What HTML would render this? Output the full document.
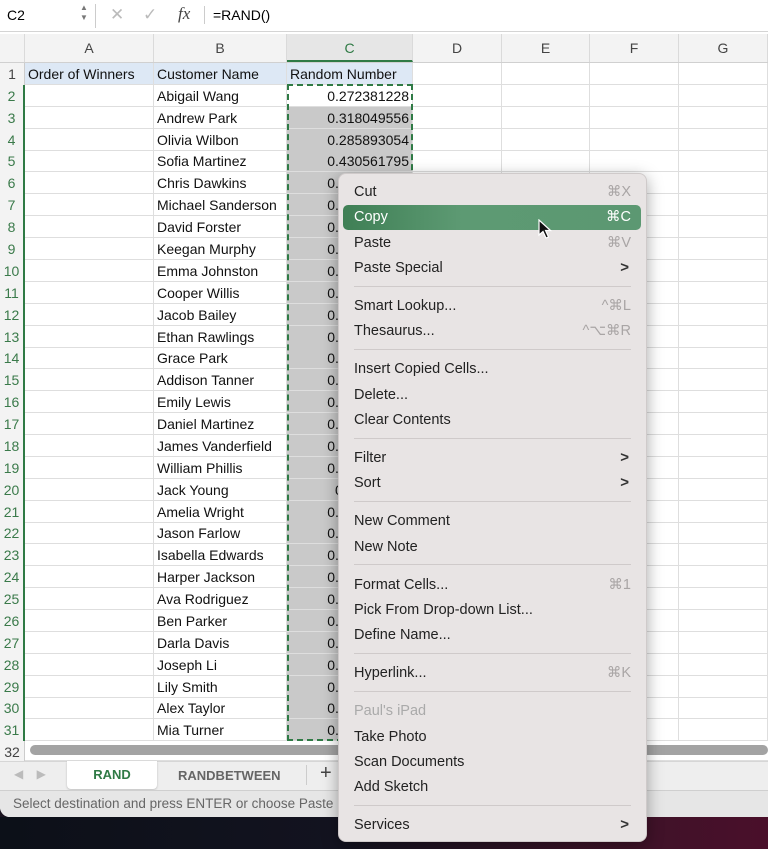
<!DOCTYPE html>
<html><head><meta charset="utf-8">
<style>
*{margin:0;padding:0;box-sizing:border-box}
body{width:768px;height:849px;overflow:hidden;background:#1a1420;font-family:"Liberation Sans",sans-serif;position:relative}
.win{position:absolute;left:0;top:0;width:768px;height:817px;background:#fff;overflow:hidden;border-bottom-left-radius:10px}
.fb{position:absolute;left:0;top:0;width:768px;height:32px;background:#fff;border-bottom:1px solid #d4d4d4;font-size:14px}
.abs{position:absolute}
.hdr{position:absolute;top:34px;height:29px;background:#f3f3f3;border-bottom:1px solid #d0d0d0;width:768px}
.ch{position:absolute;top:0;height:28px;line-height:28px;text-align:center;font-size:14px;color:#444;border-right:1px solid #dadada}
.row{position:absolute;left:0;width:768px;height:22px;border-bottom:1px solid #dedede;font-size:14px}
.rn{position:absolute;left:0;width:25px;height:22px;line-height:22px;text-align:center;background:#f3f3f3;color:#3a7a4a;border-right:2px solid #2f7a45;font-size:14px}
.c{position:absolute;top:0;height:21px;line-height:22px;border-right:1px solid #dedede;white-space:nowrap;overflow:hidden;padding:0 3px;color:#111}
.A{left:25px;width:129px}.B{left:154px;width:133px}.C{left:287px;width:126px;text-align:right;background:#c9c9c9}
.D{left:413px;width:89px}.E{left:502px;width:88px}.F{left:590px;width:89px}.G{left:679px;width:89px}
.menu{position:absolute;left:338px;top:173px;width:309px;height:669px;background:#e8e4e4;border-radius:8px;box-shadow:0 4px 16px rgba(0,0,0,.35);border:1px solid #cfcaca;font-size:14.5px;color:#222}
.mi{position:absolute;left:15px;right:15px;height:22px;line-height:22px}
.mi .k{position:absolute;right:0;top:0;color:#a9a5a5}
.sep{position:absolute;left:15px;right:15px;height:1px;background:#cfcaca}
.arr{position:absolute;right:2px;top:0;font-size:15px;font-weight:bold;color:#333}
</style></head><body>
<div class="win">
<div class="fb">
 <div class="abs" style="left:7px;top:7px">C2</div>
 <div class="abs" style="left:80px;top:3px;font-size:8px;color:#777;line-height:10px">▲<br>▼</div>
 <div class="abs" style="left:95px;top:4px;width:1px;height:24px;background:#ccc"></div>
 <div class="abs" style="left:110px;top:5px;font-size:17px;color:#bbb">✕</div>
 <div class="abs" style="left:143px;top:5px;font-size:17px;color:#bbb">✓</div>
 <div class="abs" style="left:178px;top:4px;font-family:'Liberation Serif',serif;font-style:italic;font-size:17px;color:#444">fx</div>
 <div class="abs" style="left:204px;top:6px;width:1px;height:18px;background:#ccc"></div>
 <div class="abs" style="left:213px;top:7px">=RAND()</div>
</div>
<div class="hdr">
 <div class="ch" style="left:0;width:25px"></div>
 <div class="ch" style="left:25px;width:129px">A</div>
 <div class="ch" style="left:154px;width:133px">B</div>
 <div class="ch" style="left:287px;width:126px;background:#e6e6e6;border-bottom:2px solid #2f7a45;color:#2f7a45">C</div>
 <div class="ch" style="left:413px;width:89px">D</div>
 <div class="ch" style="left:502px;width:88px">E</div>
 <div class="ch" style="left:590px;width:89px">F</div>
 <div class="ch" style="left:679px;width:89px">G</div>
</div>
<div class="row" style="top:63px"><div class="rn" style="color:#444;border-right:1px solid #ccc">1</div><div class="c A" style="background:#dde8f5">Order of Winners</div><div class="c B" style="background:#dde8f5">Customer Name</div><div class="c C" style="background:#dde8f5;text-align:left">Random Number</div><div class="c D"></div><div class="c E"></div><div class="c F"></div><div class="c G"></div></div>
<div class="row" style="top:85px"><div class="rn">2</div><div class="c A"></div><div class="c B">Abigail Wang</div><div class="c C" style="background:#fff">0.272381228</div><div class="c D"></div><div class="c E"></div><div class="c F"></div><div class="c G"></div></div>
<div class="row" style="top:107px"><div class="rn">3</div><div class="c A"></div><div class="c B">Andrew Park</div><div class="c C">0.318049556</div><div class="c D"></div><div class="c E"></div><div class="c F"></div><div class="c G"></div></div>
<div class="row" style="top:129px"><div class="rn">4</div><div class="c A"></div><div class="c B">Olivia Wilbon</div><div class="c C">0.285893054</div><div class="c D"></div><div class="c E"></div><div class="c F"></div><div class="c G"></div></div>
<div class="row" style="top:150px"><div class="rn">5</div><div class="c A"></div><div class="c B">Sofia Martinez</div><div class="c C">0.430561795</div><div class="c D"></div><div class="c E"></div><div class="c F"></div><div class="c G"></div></div>
<div class="row" style="top:172px"><div class="rn">6</div><div class="c A"></div><div class="c B">Chris Dawkins</div><div class="c C">0.512345678</div><div class="c D"></div><div class="c E"></div><div class="c F"></div><div class="c G"></div></div>
<div class="row" style="top:194px"><div class="rn">7</div><div class="c A"></div><div class="c B">Michael Sanderson</div><div class="c C">0.512345678</div><div class="c D"></div><div class="c E"></div><div class="c F"></div><div class="c G"></div></div>
<div class="row" style="top:216px"><div class="rn">8</div><div class="c A"></div><div class="c B">David Forster</div><div class="c C">0.512345678</div><div class="c D"></div><div class="c E"></div><div class="c F"></div><div class="c G"></div></div>
<div class="row" style="top:238px"><div class="rn">9</div><div class="c A"></div><div class="c B">Keegan Murphy</div><div class="c C">0.512345678</div><div class="c D"></div><div class="c E"></div><div class="c F"></div><div class="c G"></div></div>
<div class="row" style="top:260px"><div class="rn">10</div><div class="c A"></div><div class="c B">Emma Johnston</div><div class="c C">0.512345678</div><div class="c D"></div><div class="c E"></div><div class="c F"></div><div class="c G"></div></div>
<div class="row" style="top:282px"><div class="rn">11</div><div class="c A"></div><div class="c B">Cooper Willis</div><div class="c C">0.512345678</div><div class="c D"></div><div class="c E"></div><div class="c F"></div><div class="c G"></div></div>
<div class="row" style="top:304px"><div class="rn">12</div><div class="c A"></div><div class="c B">Jacob Bailey</div><div class="c C">0.512345678</div><div class="c D"></div><div class="c E"></div><div class="c F"></div><div class="c G"></div></div>
<div class="row" style="top:326px"><div class="rn">13</div><div class="c A"></div><div class="c B">Ethan Rawlings</div><div class="c C">0.512345678</div><div class="c D"></div><div class="c E"></div><div class="c F"></div><div class="c G"></div></div>
<div class="row" style="top:347px"><div class="rn">14</div><div class="c A"></div><div class="c B">Grace Park</div><div class="c C">0.512345678</div><div class="c D"></div><div class="c E"></div><div class="c F"></div><div class="c G"></div></div>
<div class="row" style="top:369px"><div class="rn">15</div><div class="c A"></div><div class="c B">Addison Tanner</div><div class="c C">0.512345678</div><div class="c D"></div><div class="c E"></div><div class="c F"></div><div class="c G"></div></div>
<div class="row" style="top:391px"><div class="rn">16</div><div class="c A"></div><div class="c B">Emily Lewis</div><div class="c C">0.512345678</div><div class="c D"></div><div class="c E"></div><div class="c F"></div><div class="c G"></div></div>
<div class="row" style="top:413px"><div class="rn">17</div><div class="c A"></div><div class="c B">Daniel Martinez</div><div class="c C">0.512345678</div><div class="c D"></div><div class="c E"></div><div class="c F"></div><div class="c G"></div></div>
<div class="row" style="top:435px"><div class="rn">18</div><div class="c A"></div><div class="c B">James Vanderfield</div><div class="c C">0.512345678</div><div class="c D"></div><div class="c E"></div><div class="c F"></div><div class="c G"></div></div>
<div class="row" style="top:457px"><div class="rn">19</div><div class="c A"></div><div class="c B">William Phillis</div><div class="c C">0.512345678</div><div class="c D"></div><div class="c E"></div><div class="c F"></div><div class="c G"></div></div>
<div class="row" style="top:479px"><div class="rn">20</div><div class="c A"></div><div class="c B">Jack Young</div><div class="c C">0.05123456</div><div class="c D"></div><div class="c E"></div><div class="c F"></div><div class="c G"></div></div>
<div class="row" style="top:501px"><div class="rn">21</div><div class="c A"></div><div class="c B">Amelia Wright</div><div class="c C">0.512345678</div><div class="c D"></div><div class="c E"></div><div class="c F"></div><div class="c G"></div></div>
<div class="row" style="top:522px"><div class="rn">22</div><div class="c A"></div><div class="c B">Jason Farlow</div><div class="c C">0.512345678</div><div class="c D"></div><div class="c E"></div><div class="c F"></div><div class="c G"></div></div>
<div class="row" style="top:544px"><div class="rn">23</div><div class="c A"></div><div class="c B">Isabella Edwards</div><div class="c C">0.512345678</div><div class="c D"></div><div class="c E"></div><div class="c F"></div><div class="c G"></div></div>
<div class="row" style="top:566px"><div class="rn">24</div><div class="c A"></div><div class="c B">Harper Jackson</div><div class="c C">0.512345678</div><div class="c D"></div><div class="c E"></div><div class="c F"></div><div class="c G"></div></div>
<div class="row" style="top:588px"><div class="rn">25</div><div class="c A"></div><div class="c B">Ava Rodriguez</div><div class="c C">0.512345678</div><div class="c D"></div><div class="c E"></div><div class="c F"></div><div class="c G"></div></div>
<div class="row" style="top:610px"><div class="rn">26</div><div class="c A"></div><div class="c B">Ben Parker</div><div class="c C">0.512345678</div><div class="c D"></div><div class="c E"></div><div class="c F"></div><div class="c G"></div></div>
<div class="row" style="top:632px"><div class="rn">27</div><div class="c A"></div><div class="c B">Darla Davis</div><div class="c C">0.512345678</div><div class="c D"></div><div class="c E"></div><div class="c F"></div><div class="c G"></div></div>
<div class="row" style="top:654px"><div class="rn">28</div><div class="c A"></div><div class="c B">Joseph Li</div><div class="c C">0.512345678</div><div class="c D"></div><div class="c E"></div><div class="c F"></div><div class="c G"></div></div>
<div class="row" style="top:676px"><div class="rn">29</div><div class="c A"></div><div class="c B">Lily Smith</div><div class="c C">0.512345678</div><div class="c D"></div><div class="c E"></div><div class="c F"></div><div class="c G"></div></div>
<div class="row" style="top:697px"><div class="rn">30</div><div class="c A"></div><div class="c B">Alex Taylor</div><div class="c C">0.512345678</div><div class="c D"></div><div class="c E"></div><div class="c F"></div><div class="c G"></div></div>
<div class="row" style="top:719px"><div class="rn">31</div><div class="c A"></div><div class="c B">Mia Turner</div><div class="c C">0.512345678</div><div class="c D"></div><div class="c E"></div><div class="c F"></div><div class="c G"></div></div>
<div class="row" style="top:741px;height:20px"><div class="rn" style="color:#444;border-right:1px solid #ccc">32</div></div>
<div class="abs" style="left:287px;top:84px;width:126px;height:657px;border:2px dashed #2f7a45"></div>
<div class="abs" style="left:30px;top:745px;width:738px;height:10px;background:#a3a3a3;border-radius:5px"></div>
<div class="abs" style="left:0;top:761px;width:768px;height:29px;background:#eeeeee;border-top:1px solid #d6d6d6"></div>
<div class="abs" style="left:14px;top:767px;font-size:12px;color:#bbb">◀&nbsp;&nbsp;&nbsp;&nbsp;▶</div>
<div class="abs" style="left:67px;top:761px;width:90px;height:28px;background:#fff;border-radius:0 0 4px 4px;box-shadow:0 1px 2px rgba(0,0,0,.2);text-align:center;line-height:28px;font-weight:bold;font-size:13px;color:#2f7a45">RAND</div>
<div class="abs" style="left:178px;top:768px;font-weight:bold;font-size:13px;color:#666">RANDBETWEEN</div>
<div class="abs" style="left:306px;top:765px;width:1px;height:20px;background:#ccc"></div>
<div class="abs" style="left:320px;top:762px;font-size:20px;color:#444">+</div>
<div class="abs" style="left:0;top:790px;width:768px;height:27px;background:#e6e6e6;border-top:1px solid #cfcfcf"></div>
<div class="abs" style="left:13px;top:796px;font-size:13.5px;color:#666;white-space:nowrap">Select destination and press ENTER or choose Paste</div>
</div>
<div class="abs" style="left:0;top:817px;width:768px;height:32px;background:linear-gradient(90deg,#0c1018 0%,#131320 45%,#3a1428 75%,#4a0f2a 100%)"></div>
<div class="menu">
 <div class="mi" style="top:7px">Cut<span class="k">⌘X</span></div>
 <div class="abs" style="left:4px;right:5px;top:31px;height:25px;border-radius:5px;background:linear-gradient(90deg,#3f7f55,#5d9a73 40%,#5c9872)"></div>
 <div class="mi" style="top:32px;color:#fff">Copy<span class="k" style="color:#fff">⌘C</span></div>
 <div class="mi" style="top:58px">Paste<span class="k">⌘V</span></div>
 <div class="mi" style="top:83px">Paste Special<span class="arr">&gt;</span></div>
 <div class="sep" style="top:112px"></div>
 <div class="mi" style="top:121px">Smart Lookup...<span class="k">^⌘L</span></div>
 <div class="mi" style="top:146px">Thesaurus...<span class="k">^⌥⌘R</span></div>
 <div class="sep" style="top:175px"></div>
 <div class="mi" style="top:184px">Insert Copied Cells...</div>
 <div class="mi" style="top:210px">Delete...</div>
 <div class="mi" style="top:235px">Clear Contents</div>
 <div class="sep" style="top:264px"></div>
 <div class="mi" style="top:273px">Filter<span class="arr">&gt;</span></div>
 <div class="mi" style="top:298px">Sort<span class="arr">&gt;</span></div>
 <div class="sep" style="top:327px"></div>
 <div class="mi" style="top:336px">New Comment</div>
 <div class="mi" style="top:362px">New Note</div>
 <div class="sep" style="top:390px"></div>
 <div class="mi" style="top:400px">Format Cells...<span class="k">⌘1</span></div>
 <div class="mi" style="top:425px">Pick From Drop-down List...</div>
 <div class="mi" style="top:450px">Define Name...</div>
 <div class="sep" style="top:479px"></div>
 <div class="mi" style="top:488px">Hyperlink...<span class="k">⌘K</span></div>
 <div class="sep" style="top:517px"></div>
 <div class="mi" style="top:526px;color:#aaa">Paul's iPad</div>
 <div class="mi" style="top:552px">Take Photo</div>
 <div class="mi" style="top:577px">Scan Documents</div>
 <div class="mi" style="top:602px">Add Sketch</div>
 <div class="sep" style="top:631px"></div>
 <div class="mi" style="top:640px">Services<span class="arr">&gt;</span></div>
</div>
<svg class="abs" style="left:538px;top:219px" width="14" height="22" viewBox="0 0 14 22"><path d="M1 1 L1 16 L5 12.5 L8 19 L10.5 18 L7.5 11.5 L12.5 11.5 Z" fill="#111" stroke="#fff" stroke-width="1.2"/></svg>
</body></html>
